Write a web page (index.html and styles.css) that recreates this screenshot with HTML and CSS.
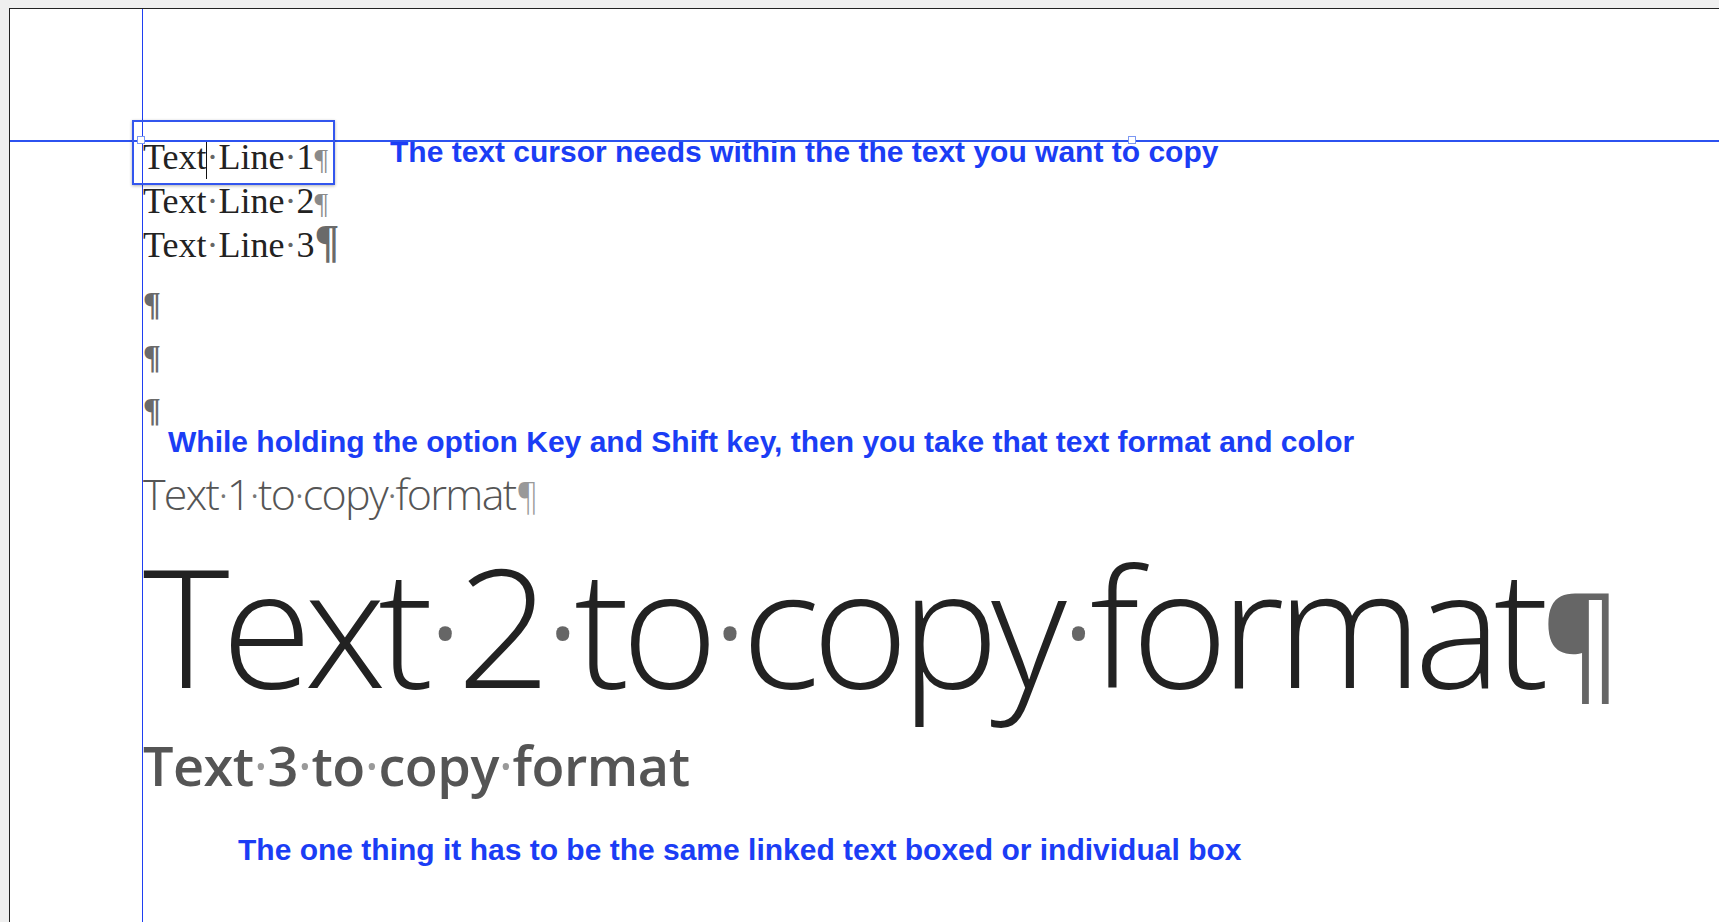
FILE: index.html
```html
<!DOCTYPE html>
<html lang="en">
<head>
    <meta charset="UTF-8">
    <meta name="viewport" content="width=device-width, initial-scale=1.0">
    <title>Copy text format</title>
    <link rel="stylesheet" href="styles.css">
</head>
<body>

    <div class="page">
        <!-- guides and the selected frame sit over the text -->
        <div class="guide guide-v"></div>
        <div class="guide guide-h"></div>
        <div class="handle handle-a"></div>
        <div class="handle handle-b"></div>
        <div class="frame-sel"></div>

        <div class="story">
            <div class="row-top">
                <div class="lines">
                    <p>Text<span class="caret"></span><span class="dot">·</span>Line<span class="dot">·</span>1<span class="pil">¶</span></p>
                    <p>Text<span class="dot">·</span>Line<span class="dot">·</span>2<span class="pil">¶</span></p>
                    <p>Text<span class="dot">·</span>Line<span class="dot">·</span>3<span class="pil pil-big">¶</span></p>
                </div>
                <div class="note note-1">The text cursor needs within the the text you want to copy</div>
            </div>

            <div class="empty">
                <p>¶</p>
                <p>¶</p>
                <p>¶</p>
            </div>

            <div class="note note-2">While holding the option Key and Shift key, then you take that text format and color</div>

            <p class="fmt-1">Text<span class="dot">·</span>1<span class="dot">·</span>to<span class="dot">·</span>copy<span class="dot">·</span>format<span class="pil">¶</span></p>
            <p class="fmt-2">Text<span class="dot">·</span>2<span class="dot">·</span>to<span class="dot">·</span>copy<span class="dot">·</span>format<span class="pil">¶</span></p>
            <p class="fmt-3">Text<span class="dot">·</span>3<span class="dot">·</span>to<span class="dot">·</span>copy<span class="dot">·</span>format</p>

            <div class="note note-3">The one thing it has to be the same linked text boxed or individual box</div>
        </div>
    </div>

</body>
</html>
```

FILE: styles.css
```css
html, body {
    margin: 0;
    padding: 0;
    height: 100%;
}
body {
    background: #efefef;
    overflow: hidden;
}
p {
    margin: 0;
}
.page {
    position: relative;
    margin: 8px 0 0 9px;
    height: calc(100% - 8px);
    background: #fff;
    border-top: 1px solid #222;
    border-left: 1px solid #222;
    box-sizing: border-box;
    overflow: hidden;
}
.guide {
    position: absolute;
    background: #1f3ff2;
}
.guide-v {
    left: 132px;
    top: 0;
    bottom: 0;
    width: 1px;
}
.guide-h {
    left: 0;
    right: 0;
    top: 131px;
    height: 2px;
    background: #2c52f0;
}
.handle {
    position: absolute;
    width: 6px;
    height: 6px;
    border: 1px solid #7b97f2;
    background: #fff;
}
.handle-a {
    left: 127px;
    top: 127px;
}
.handle-b {
    left: 1118px;
    top: 127px;
}
.frame-sel {
    position: absolute;
    left: 122px;
    top: 111px;
    width: 199px;
    height: 61px;
    border: 2px solid #3356ee;
    box-shadow: 0 1px 3px rgba(0, 0, 0, 0.3);
}
.story {
    padding: 126px 0 0 133px;
}
.row-top {
    display: flex;
    align-items: flex-start;
}
.lines {
    width: 247px;
    font-family: "Liberation Serif", "Times New Roman", serif;
    font-size: 36px;
    line-height: 44px;
    color: #222;
}
.lines p {
    height: 44px;
    white-space: nowrap;
}
.caret {
    display: inline-block;
    width: 1px;
    height: 37px;
    margin-right: -1px;
    background: #111;
    vertical-align: -10px;
}
.dot {
    color: #666;
}
.pil {
    color: #8a8a8a;
    font-size: 30px;
    line-height: 0;
}
.pil-big {
    font-size: 46px;
    font-weight: bold;
    color: #6a6a6a;
}
.note {
    font-family: "Liberation Sans", Arial, sans-serif;
    font-weight: bold;
    font-size: 30px;
    line-height: 32px;
    color: #1b3df5;
    white-space: nowrap;
}
.note-1 {
    margin-top: 1px;
}
.empty {
    margin-top: 11px;
    font-family: "Liberation Serif", "Times New Roman", serif;
    font-weight: bold;
    font-size: 33px;
    line-height: 53px;
    color: #6a6a6a;
}
.note-2 {
    margin: -11px 0 0 25px;
}
.fmt-1 {
    margin-top: 6px;
    font-family: "Open Sans", sans-serif;
    font-weight: 300;
    font-size: 43px;
    letter-spacing: -1.7px;
    color: #555;
}
.fmt-1 .dot {
    color: #777;
}
.fmt-1 .pil {
    font-size: 36px;
    color: #999;
}
.fmt-2 {
    margin-top: 19px;
    font-family: "Open Sans", sans-serif;
    font-weight: 300;
    font-size: 165px;
    line-height: 165px;
    letter-spacing: -8px;
    color: #222;
    white-space: nowrap;
}
.fmt-2 .pil {
    font-size: 124px;
    font-weight: 400;
    letter-spacing: 0;
    color: #666;
}
.fmt-3 {
    margin-top: 31px;
    font-family: "Open Sans", sans-serif;
    font-weight: 600;
    font-size: 54px;
    line-height: 54px;
    letter-spacing: -0.5px;
    color: #555;
}
.fmt-3 .dot {
    color: #999;
    font-weight: 400;
}
.note-3 {
    margin: 42px 0 0 95px;
}
```
